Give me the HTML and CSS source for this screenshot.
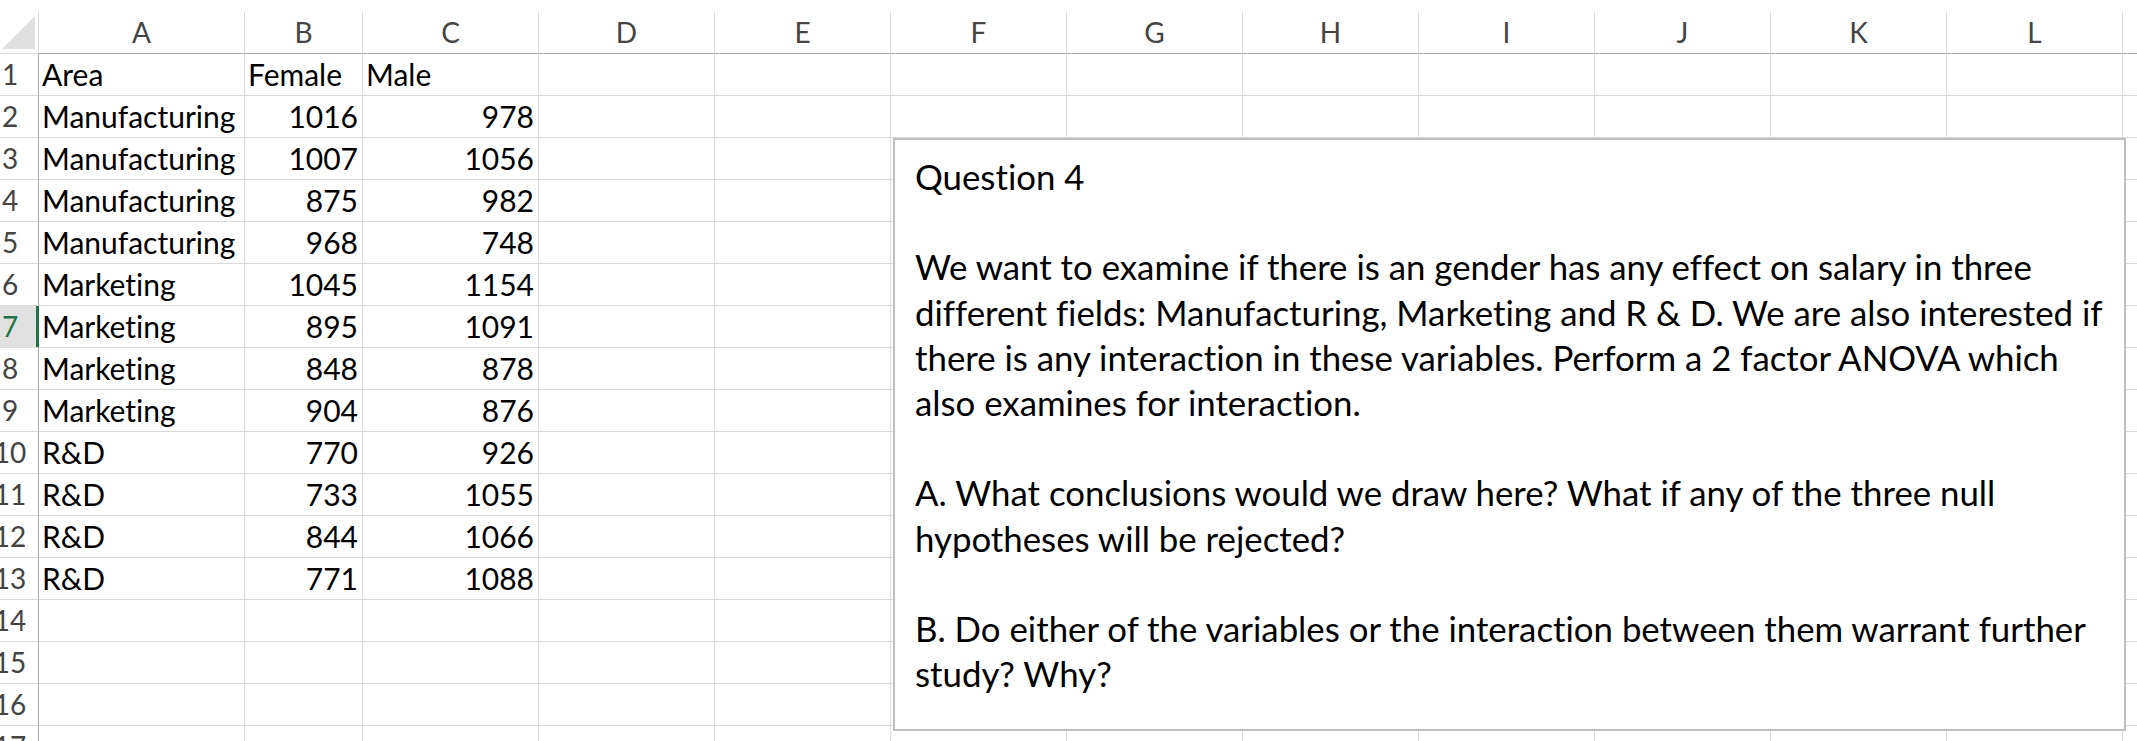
FILE: index.html
```html
<!DOCTYPE html>
<html>
<head>
<meta charset="utf-8">
<title>Sheet</title>
<link rel="stylesheet" href="styles.css">
</head>
<body>
<div class="sheet">
  <div class="top"></div>
  <div class="row hdr">
    <div class="cell corner"><svg class="tri" width="38" height="41" viewBox="0 0 38 41"><polygon points="35,4 35,37 2,37" fill="#dfdfdf"/></svg></div>
    <div class="cell a">A</div><div class="cell b">B</div><div class="cell">C</div><div class="cell">D</div><div class="cell">E</div><div class="cell">F</div><div class="cell">G</div><div class="cell">H</div><div class="cell">I</div><div class="cell">J</div><div class="cell">K</div><div class="cell">L</div><div class="cell"></div>
  </div>
  <div class="row"><div class="cell rh"><span>1</span></div><div class="cell a">Area</div><div class="cell b">Female</div><div class="cell">Male</div><div class="cell"></div><div class="cell"></div><div class="cell"></div><div class="cell"></div><div class="cell"></div><div class="cell"></div><div class="cell"></div><div class="cell"></div><div class="cell"></div><div class="cell"></div></div>
  <div class="row"><div class="cell rh"><span>2</span></div><div class="cell a">Manufacturing</div><div class="cell b n">1016</div><div class="cell n">978</div><div class="cell"></div><div class="cell"></div><div class="cell"></div><div class="cell"></div><div class="cell"></div><div class="cell"></div><div class="cell"></div><div class="cell"></div><div class="cell"></div><div class="cell"></div></div>
  <div class="row"><div class="cell rh"><span>3</span></div><div class="cell a">Manufacturing</div><div class="cell b n">1007</div><div class="cell n">1056</div><div class="cell"></div><div class="cell"></div><div class="cell"></div><div class="cell"></div><div class="cell"></div><div class="cell"></div><div class="cell"></div><div class="cell"></div><div class="cell"></div><div class="cell"></div></div>
  <div class="row"><div class="cell rh"><span>4</span></div><div class="cell a">Manufacturing</div><div class="cell b n">875</div><div class="cell n">982</div><div class="cell"></div><div class="cell"></div><div class="cell"></div><div class="cell"></div><div class="cell"></div><div class="cell"></div><div class="cell"></div><div class="cell"></div><div class="cell"></div><div class="cell"></div></div>
  <div class="row"><div class="cell rh"><span>5</span></div><div class="cell a">Manufacturing</div><div class="cell b n">968</div><div class="cell n">748</div><div class="cell"></div><div class="cell"></div><div class="cell"></div><div class="cell"></div><div class="cell"></div><div class="cell"></div><div class="cell"></div><div class="cell"></div><div class="cell"></div><div class="cell"></div></div>
  <div class="row"><div class="cell rh"><span>6</span></div><div class="cell a">Marketing</div><div class="cell b n">1045</div><div class="cell n">1154</div><div class="cell"></div><div class="cell"></div><div class="cell"></div><div class="cell"></div><div class="cell"></div><div class="cell"></div><div class="cell"></div><div class="cell"></div><div class="cell"></div><div class="cell"></div></div>
  <div class="row"><div class="cell rh active"><span>7</span></div><div class="cell a">Marketing</div><div class="cell b n">895</div><div class="cell n">1091</div><div class="cell"></div><div class="cell"></div><div class="cell"></div><div class="cell"></div><div class="cell"></div><div class="cell"></div><div class="cell"></div><div class="cell"></div><div class="cell"></div><div class="cell"></div></div>
  <div class="row"><div class="cell rh"><span>8</span></div><div class="cell a">Marketing</div><div class="cell b n">848</div><div class="cell n">878</div><div class="cell"></div><div class="cell"></div><div class="cell"></div><div class="cell"></div><div class="cell"></div><div class="cell"></div><div class="cell"></div><div class="cell"></div><div class="cell"></div><div class="cell"></div></div>
  <div class="row"><div class="cell rh"><span>9</span></div><div class="cell a">Marketing</div><div class="cell b n">904</div><div class="cell n">876</div><div class="cell"></div><div class="cell"></div><div class="cell"></div><div class="cell"></div><div class="cell"></div><div class="cell"></div><div class="cell"></div><div class="cell"></div><div class="cell"></div><div class="cell"></div></div>
  <div class="row"><div class="cell rh"><span>10</span></div><div class="cell a">R&amp;D</div><div class="cell b n">770</div><div class="cell n">926</div><div class="cell"></div><div class="cell"></div><div class="cell"></div><div class="cell"></div><div class="cell"></div><div class="cell"></div><div class="cell"></div><div class="cell"></div><div class="cell"></div><div class="cell"></div></div>
  <div class="row"><div class="cell rh"><span>11</span></div><div class="cell a">R&amp;D</div><div class="cell b n">733</div><div class="cell n">1055</div><div class="cell"></div><div class="cell"></div><div class="cell"></div><div class="cell"></div><div class="cell"></div><div class="cell"></div><div class="cell"></div><div class="cell"></div><div class="cell"></div><div class="cell"></div></div>
  <div class="row"><div class="cell rh"><span>12</span></div><div class="cell a">R&amp;D</div><div class="cell b n">844</div><div class="cell n">1066</div><div class="cell"></div><div class="cell"></div><div class="cell"></div><div class="cell"></div><div class="cell"></div><div class="cell"></div><div class="cell"></div><div class="cell"></div><div class="cell"></div><div class="cell"></div></div>
  <div class="row"><div class="cell rh"><span>13</span></div><div class="cell a">R&amp;D</div><div class="cell b n">771</div><div class="cell n">1088</div><div class="cell"></div><div class="cell"></div><div class="cell"></div><div class="cell"></div><div class="cell"></div><div class="cell"></div><div class="cell"></div><div class="cell"></div><div class="cell"></div><div class="cell"></div></div>
  <div class="row"><div class="cell rh"><span>14</span></div><div class="cell a"></div><div class="cell b"></div><div class="cell"></div><div class="cell"></div><div class="cell"></div><div class="cell"></div><div class="cell"></div><div class="cell"></div><div class="cell"></div><div class="cell"></div><div class="cell"></div><div class="cell"></div><div class="cell"></div></div>
  <div class="row"><div class="cell rh"><span>15</span></div><div class="cell a"></div><div class="cell b"></div><div class="cell"></div><div class="cell"></div><div class="cell"></div><div class="cell"></div><div class="cell"></div><div class="cell"></div><div class="cell"></div><div class="cell"></div><div class="cell"></div><div class="cell"></div><div class="cell"></div></div>
  <div class="row"><div class="cell rh"><span>16</span></div><div class="cell a"></div><div class="cell b"></div><div class="cell"></div><div class="cell"></div><div class="cell"></div><div class="cell"></div><div class="cell"></div><div class="cell"></div><div class="cell"></div><div class="cell"></div><div class="cell"></div><div class="cell"></div><div class="cell"></div></div>
  <div class="row"><div class="cell rh"><span>17</span></div><div class="cell a"></div><div class="cell b"></div><div class="cell"></div><div class="cell"></div><div class="cell"></div><div class="cell"></div><div class="cell"></div><div class="cell"></div><div class="cell"></div><div class="cell"></div><div class="cell"></div><div class="cell"></div><div class="cell"></div></div>
</div>

<div class="note">
  <p>Question 4</p>
  <p>We want to examine if there is an gender has any effect on salary in three<br>different fields: Manufacturing, Marketing and R &amp; D. We are also interested if<br>there is any interaction in these variables. Perform a 2 factor ANOVA which<br>also examines for interaction.</p>
  <p>A. What conclusions would we draw here? What if any of the three null<br>hypotheses will be rejected?</p>
  <p>B. Do either of the variables or the interaction between them warrant further<br>study? Why?</p>
</div>
</body>
</html>
```
FILE: styles.css
```css
html, body {
  margin: 0;
  padding: 0;
  overflow: hidden;
  background: #fff;
}
body {
  width: 2137px;
  height: 741px;
  position: relative;
  font-family: Lato, "Open Sans", sans-serif;
  font-variant-ligatures: none;
}
.sheet {
  width: 2137px;
  overflow: hidden;
}
.top {
  height: 12px;
}
.row {
  display: flex;
  height: 42px;
}
.cell {
  flex: none;
  box-sizing: border-box;
  width: 176px;
  height: 42px;
  border-right: 1px solid #dadada;
  border-bottom: 1px solid #dadada;
  padding: 0 4px 0 3px;
  font-size: 30px;
  line-height: 41px;
  color: #000;
  white-space: nowrap;
  overflow: hidden;
}
.cell.a { width: 206px; }
.cell.b { width: 118px; }
.cell.n { text-align: right; }

.hdr .cell {
  border-bottom-color: #ababab;
  text-align: center;
  color: #444;
  font-size: 28px;
  padding: 0;
}
.hdr .corner {
  width: 39px;
  border-bottom-color: #dadada;
}
.tri { display: block; }

.rh {
  width: 39px;
  padding: 0;
  border-right-color: #ababab;
  color: #444;
  font-size: 28px;
}
.rh span {
  display: block;
  width: 56px;
  margin-left: -18px;
  text-align: center;
}
.rh.active {
  background: #e1e1e1;
  color: #217346;
  border-right-color: #217346;
  box-shadow: inset -2px 0 0 #217346;
}

.note {
  position: absolute;
  left: 893px;
  top: 138px;
  width: 1233px;
  height: 593px;
  box-sizing: border-box;
  border: 2px solid #bfbfbf;
  background: #fff;
  padding: 14px 0 0 20px;
  font-size: 34.8px;
  line-height: 45.2px;
  color: #000;
  white-space: nowrap;
}
.note p {
  margin: 0 0 45.2px;
}
```
